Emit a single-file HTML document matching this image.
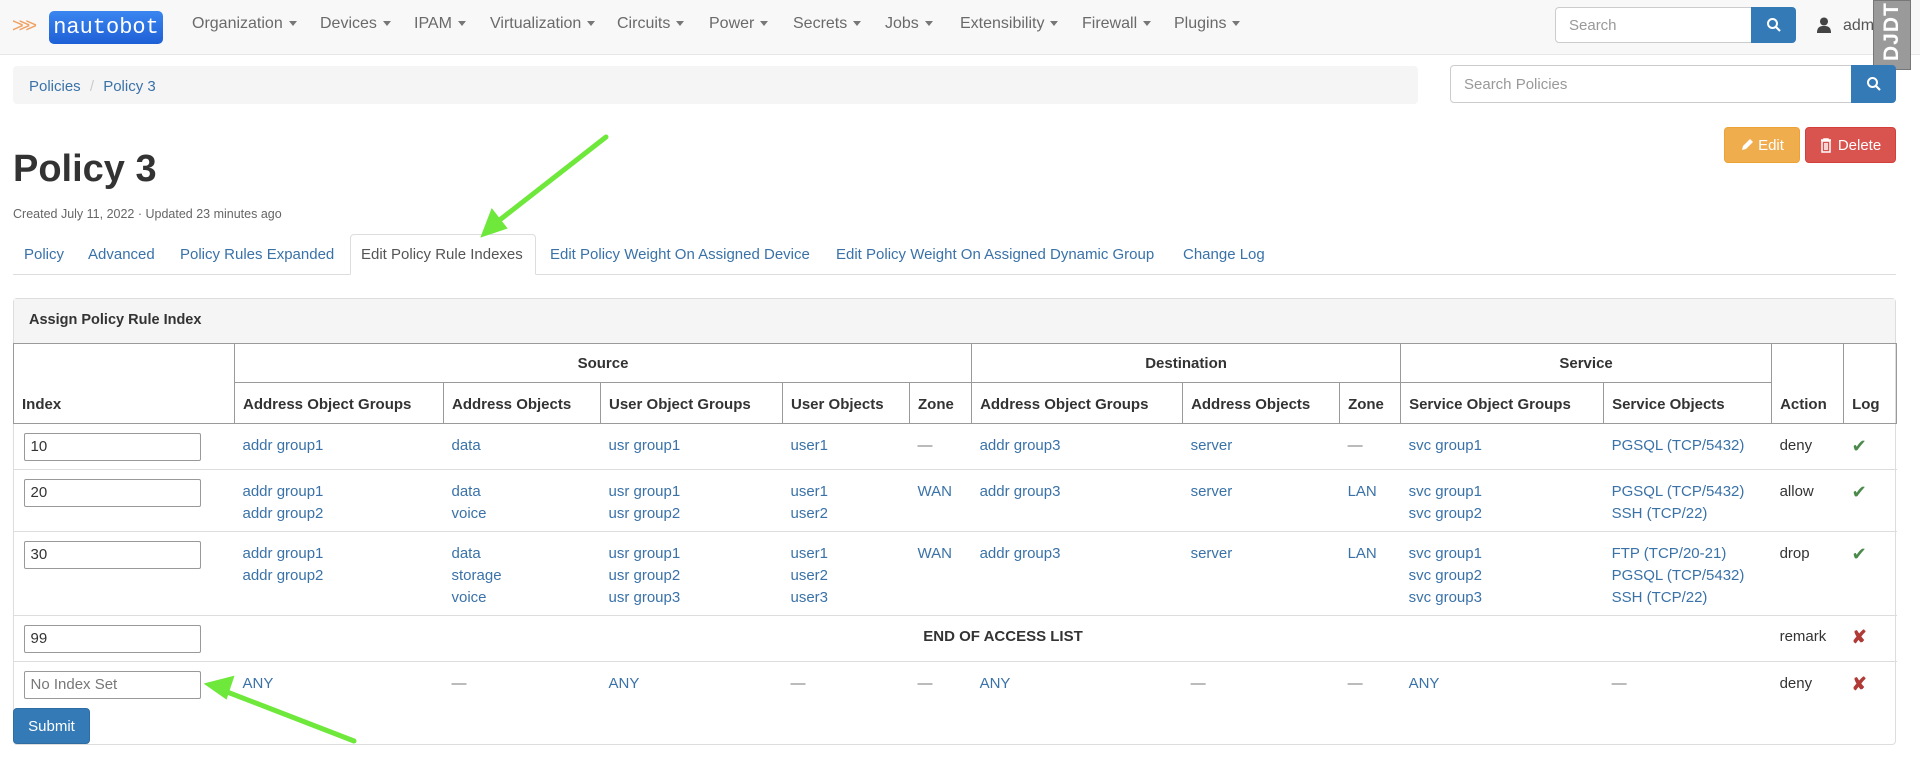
<!DOCTYPE html>
<html><head><meta charset="utf-8"><style>
*{box-sizing:border-box;margin:0;padding:0}
body{width:1920px;height:765px;overflow:hidden;background:#fff;font-family:"Liberation Sans",Arial,sans-serif;color:#333;position:relative}
.abs{position:absolute}
a{color:#3a72a8;text-decoration:none}
.nav{left:0;top:0;width:1920px;height:55px;background:#f8f8f8;border-bottom:1px solid #e7e7e7}
.ni{position:absolute;top:15px;font-size:16px;color:#6a6a6a;white-space:nowrap}
.ni:after{content:"";display:inline-block;margin-left:6px;vertical-align:middle;border-left:4px solid transparent;border-right:4px solid transparent;border-top:5px solid #777}
.inp{background:#fff;border:1px solid #ccc;border-radius:4px;font-size:15px;color:#999;padding-left:13px;display:flex;align-items:center}
.btnb{background:#337ab7;display:flex;align-items:center;justify-content:center}
.tab{position:absolute;top:246px;font-size:15px;color:#3a72a8;white-space:nowrap}
table{position:absolute;left:13px;top:343px;border-collapse:collapse;table-layout:fixed;width:1883px;font-size:15px}
th{font-weight:bold;color:#333;border:1.5px solid #9a9a9a;text-align:left;padding:0 8px;vertical-align:bottom;padding-bottom:10px}
th.c{text-align:center;vertical-align:middle;padding:0}
td{border-top:1px solid #ddd;vertical-align:top;padding:11px 8px 0;line-height:22px;white-space:nowrap}
td.ix{padding:9px 0 0 10px}
.ib{width:177px;height:28px;border:1px solid #999;border-radius:2px;font-size:15px;padding-left:6px;line-height:26px;color:#333;background:#fff}
.ok{color:#4a8a4a;font-size:18px}
.no{color:#b03a36;font-size:18px;font-weight:bold}
.dash{color:#777}
</style></head><body>
<div class="abs nav"></div>
<div class="abs" style="left:12px;top:15px;font-size:20px;color:#f0a060;letter-spacing:-5px">&gt;&gt;&gt;</div>
<div class="abs" style="left:49px;top:11px;width:114px;height:33px;background:linear-gradient(#3a86f0,#1e5fd6);border-radius:5px;color:#fff;font-family:'Liberation Mono',monospace;font-size:22px;line-height:33px;text-align:center">nautobot</div>
<div class="ni" style="left:192px">Organization</div>
<div class="ni" style="left:320px">Devices</div>
<div class="ni" style="left:414px">IPAM</div>
<div class="ni" style="left:490px">Virtualization</div>
<div class="ni" style="left:617px">Circuits</div>
<div class="ni" style="left:709px">Power</div>
<div class="ni" style="left:793px">Secrets</div>
<div class="ni" style="left:885px">Jobs</div>
<div class="ni" style="left:960px">Extensibility</div>
<div class="ni" style="left:1082px">Firewall</div>
<div class="ni" style="left:1174px">Plugins</div>
<div class="abs inp" style="left:1555px;top:7px;width:200px;height:36px;border-radius:4px 0 0 4px">Search</div>
<div class="abs btnb" style="left:1751px;top:7px;width:45px;height:36px;border-radius:0 4px 4px 0"><svg width="16" height="16" viewBox="0 0 16 16"><circle cx="6.5" cy="6.5" r="4.5" fill="none" stroke="#fff" stroke-width="2"/><path d="M10 10l4 4" stroke="#fff" stroke-width="2.2"/></svg></div>
<svg class="abs" style="left:1817px;top:17px" width="14" height="16" viewBox="0 0 14 16"><circle cx="7" cy="4.5" r="4" fill="#444"/><path d="M0 16c0-6 3-7 7-7s7 1 7 7z" fill="#444"/></svg>
<div class="abs" style="left:1843px;top:17px;font-size:16px;color:#555">admin</div>
<div class="abs" style="left:1873px;top:0;width:38px;height:70px;background:#9a9a9a;border:1px solid #777"><div style="position:absolute;left:6px;top:60px;transform:rotate(-90deg);transform-origin:0 0;color:#fff;font-weight:bold;font-size:21px;letter-spacing:1px">DJDT</div></div>
<div class="abs" style="left:13px;top:66px;width:1405px;height:38px;background:#f5f5f5;border-radius:4px"></div>
<div class="abs" style="left:29px;top:78px;font-size:15px"><a>Policies</a> <span style="color:#ccc;padding:0 5px">/</span> <a>Policy 3</a></div>
<div class="abs inp" style="left:1450px;top:65px;width:405px;height:38px;border-radius:4px 0 0 4px">Search Policies</div>
<div class="abs btnb" style="left:1851px;top:65px;width:45px;height:38px;border-radius:0 4px 4px 0"><svg width="16" height="16" viewBox="0 0 16 16"><circle cx="6.5" cy="6.5" r="4.5" fill="none" stroke="#fff" stroke-width="2"/><path d="M10 10l4 4" stroke="#fff" stroke-width="2.2"/></svg></div>
<div class="abs" style="left:1724px;top:127px;width:76px;height:36px;background:#f0ad4e;border:1px solid #eea236;border-radius:4px;color:#fff;font-size:15px;display:flex;align-items:center;justify-content:center"><svg width="13" height="14" viewBox="0 0 13 14" style="margin-right:5px"><path d="M2 12l1-4 7-7 3 3-7 7z" fill="#fff"/></svg>Edit</div>
<div class="abs" style="left:1805px;top:127px;width:91px;height:36px;background:#d9534f;border:1px solid #d43f3a;border-radius:4px;color:#fff;font-size:15px;display:flex;align-items:center;justify-content:center"><svg width="12" height="15" viewBox="0 0 12 15" style="margin-right:6px"><path d="M1 2h10M4 2V1h4v1M2 3h8v11H2z M5 5v7M7 5v7" fill="none" stroke="#fff" stroke-width="1.5"/></svg>Delete</div>
<div class="abs" style="left:13px;top:148px;font-size:38px;font-weight:bold;color:#333">Policy 3</div>
<div class="abs" style="left:13px;top:207px;font-size:12.5px;color:#666">Created July 11, 2022 · Updated 23 minutes ago</div>
<div class="abs" style="left:13px;top:274px;width:1883px;height:1px;background:#ddd"></div>
<div class="abs" style="left:350px;top:234px;width:186px;height:41px;background:#fff;border:1px solid #ddd;border-bottom-color:#fff;border-radius:4px 4px 0 0"></div>
<div class="tab" style="left:24px">Policy</div>
<div class="tab" style="left:88px">Advanced</div>
<div class="tab" style="left:180px">Policy Rules Expanded</div>
<div class="tab" style="left:361px;color:#555">Edit Policy Rule Indexes</div>
<div class="tab" style="left:550px">Edit Policy Weight On Assigned Device</div>
<div class="tab" style="left:836px">Edit Policy Weight On Assigned Dynamic Group</div>
<div class="tab" style="left:1183px">Change Log</div>
<div class="abs" style="left:13px;top:298px;width:1883px;height:447px;border:1px solid #ddd;border-radius:4px"></div>
<div class="abs" style="left:14px;top:299px;width:1881px;height:44px;background:#f5f5f5"></div>
<div class="abs" style="left:29px;top:312px;font-size:14.5px;font-weight:bold;color:#333">Assign Policy Rule Index</div>
<table>
<colgroup><col style="width:221px"><col style="width:209px"><col style="width:157px"><col style="width:182px"><col style="width:127px"><col style="width:62px"><col style="width:211px"><col style="width:157px"><col style="width:61px"><col style="width:203px"><col style="width:168px"><col style="width:72px"><col style="width:53px"></colgroup>
<tr style="height:39px"><th rowspan="2">Index</th><th class="c" colspan="5">Source</th><th class="c" colspan="3">Destination</th><th class="c" colspan="2">Service</th><th rowspan="2">Action</th><th rowspan="2">Log</th></tr>
<tr style="height:41px"><th>Address Object Groups</th><th>Address Objects</th><th>User Object Groups</th><th>User Objects</th><th>Zone</th><th>Address Object Groups</th><th>Address Objects</th><th>Zone</th><th>Service Object Groups</th><th>Service Objects</th></tr>
<tr style="height:46px"><td class="ix"><div class="ib">10</div></td><td><a>addr group1</a></td><td><a>data</a></td><td><a>usr group1</a></td><td><a>user1</a></td><td class="dash">—</td><td><a>addr group3</a></td><td><a>server</a></td><td class="dash">—</td><td><a>svc group1</a></td><td><a>PGSQL (TCP/5432)</a></td><td>deny</td><td class="ok">✔</td></tr>
<tr style="height:62px"><td class="ix"><div class="ib">20</div></td><td><a>addr group1<br>addr group2</a></td><td><a>data<br>voice</a></td><td><a>usr group1<br>usr group2</a></td><td><a>user1<br>user2</a></td><td><a>WAN</a></td><td><a>addr group3</a></td><td><a>server</a></td><td><a>LAN</a></td><td><a>svc group1<br>svc group2</a></td><td><a>PGSQL (TCP/5432)<br>SSH (TCP/22)</a></td><td>allow</td><td class="ok">✔</td></tr>
<tr style="height:84px"><td class="ix"><div class="ib">30</div></td><td><a>addr group1<br>addr group2</a></td><td><a>data<br>storage<br>voice</a></td><td><a>usr group1<br>usr group2<br>usr group3</a></td><td><a>user1<br>user2<br>user3</a></td><td><a>WAN</a></td><td><a>addr group3</a></td><td><a>server</a></td><td><a>LAN</a></td><td><a>svc group1<br>svc group2<br>svc group3</a></td><td><a>FTP (TCP/20-21)<br>PGSQL (TCP/5432)<br>SSH (TCP/22)</a></td><td>drop</td><td class="ok">✔</td></tr>
<tr style="height:46px"><td class="ix"><div class="ib">99</div></td><td colspan="10" style="text-align:center;font-weight:bold;padding-top:10px">END OF ACCESS LIST</td><td style="padding-top:10px">remark</td><td class="no" style="padding-top:10px">✘</td></tr>
<tr style="height:47px"><td class="ix"><div class="ib" style="color:#777">No Index Set</div></td><td><a>ANY</a></td><td class="dash">—</td><td><a>ANY</a></td><td class="dash">—</td><td class="dash">—</td><td><a>ANY</a></td><td class="dash">—</td><td class="dash">—</td><td><a>ANY</a></td><td class="dash">—</td><td>deny</td><td class="no">✘</td></tr>
</table>
<div class="abs" style="left:13px;top:708px;width:77px;height:36px;background:#337ab7;border:1px solid #2e6da4;border-radius:4px;color:#fff;font-size:15px;display:flex;align-items:center;justify-content:center">Submit</div>
<svg class="abs" style="left:0;top:0" width="1920" height="765" viewBox="0 0 1920 765">
<g stroke="#6ee83a" stroke-width="5" fill="#6ee83a" stroke-linecap="round">
<path d="M606 137L492 226" fill="none"/><path d="M482 236l10-26 14 18z" stroke-width="2"/>
<path d="M354 741L222 690" fill="none"/><path d="M206 684l27-7-7 21z" stroke-width="2"/>
</g></svg>
</body></html>
